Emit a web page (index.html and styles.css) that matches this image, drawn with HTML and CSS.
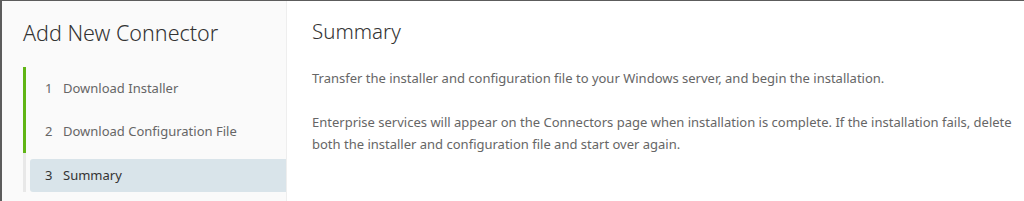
FILE: index.html
```html
<!DOCTYPE html>
<html lang="en">
  <head>
    <meta charset="utf-8" />
    <title>Add New Connector</title>
    <link rel="stylesheet" href="styles.css">
  </head>
  <body>
    <div class="wizard">
      <div class="wizard-nav">
        <h3 class="wizard-title">Add New Connector</h3>
        <div class="steps">
          <div class="step done"><span class="num">1</span>Download Installer</div>
          <div class="step done"><span class="num">2</span>Download Configuration File</div>
          <div class="step active"><span class="num">3</span>Summary</div>
        </div>
      </div>
      <div class="wizard-body">
        <h3 class="page-title">Summary</h3>
        <p>Transfer the installer and configuration file to your Windows server, and begin the installation.</p>
        <p>Enterprise services will appear on the Connectors page when installation is complete. If the installation fails, delete both the installer and configuration file and start over again.</p>
      </div>
    </div>
  </body>
</html>
```
FILE: styles.css
```css
body {
  margin: 0;
  font-family: "Noto Sans", "Open Sans", sans-serif;
  background: #fff;
  color: #666;
}
.wizard {
  display: flex;
  height: 201px;
  box-sizing: border-box;
  border-top: 1px solid #5c5c5c;
  border-left: 2px solid #5c5c5c;
  overflow: hidden;
}
.wizard-nav {
  width: 285px;
  flex-shrink: 0;
  background: #fafafa;
  border-right: 1px solid #eee;
  padding: 17px 0 0 21px;
  box-sizing: border-box;
}
.wizard-title {
  margin: 0 0 19px;
  font-size: 21.5px;
  font-weight: 300;
  color: #333;
  line-height: 30px;
}
.steps {
  border-left: 3px solid #e8e8e8;
  padding-left: 4px;
}
.step {
  height: 43px;
  line-height: 43px;
  font-size: 13px;
  padding-left: 15px;
  color: #666;
  position: relative;
}
.step.done::before {
  content: "";
  position: absolute;
  left: -7px;
  top: 0;
  bottom: 0;
  width: 3px;
  background: #60b515;
}
.step.active {
  height: 33px;
  line-height: 33px;
  margin-top: 6px;
  background: #d9e4ea;
  color: #333;
  border-radius: 3px 0 0 3px;
}
.num {
  display: inline-block;
  width: 18px;
}
.wizard-body {
  flex: 1;
  padding: 15px 10px 0 25px;
}
.page-title {
  margin: 0;
  font-size: 20.5px;
  font-weight: 300;
  color: #333;
  line-height: 30px;
}
.wizard-body p {
  margin: 21px 0 0;
  font-size: 13px;
  line-height: 22px;
}
.wizard-body p + p {
  margin-top: 22px;
}
```
